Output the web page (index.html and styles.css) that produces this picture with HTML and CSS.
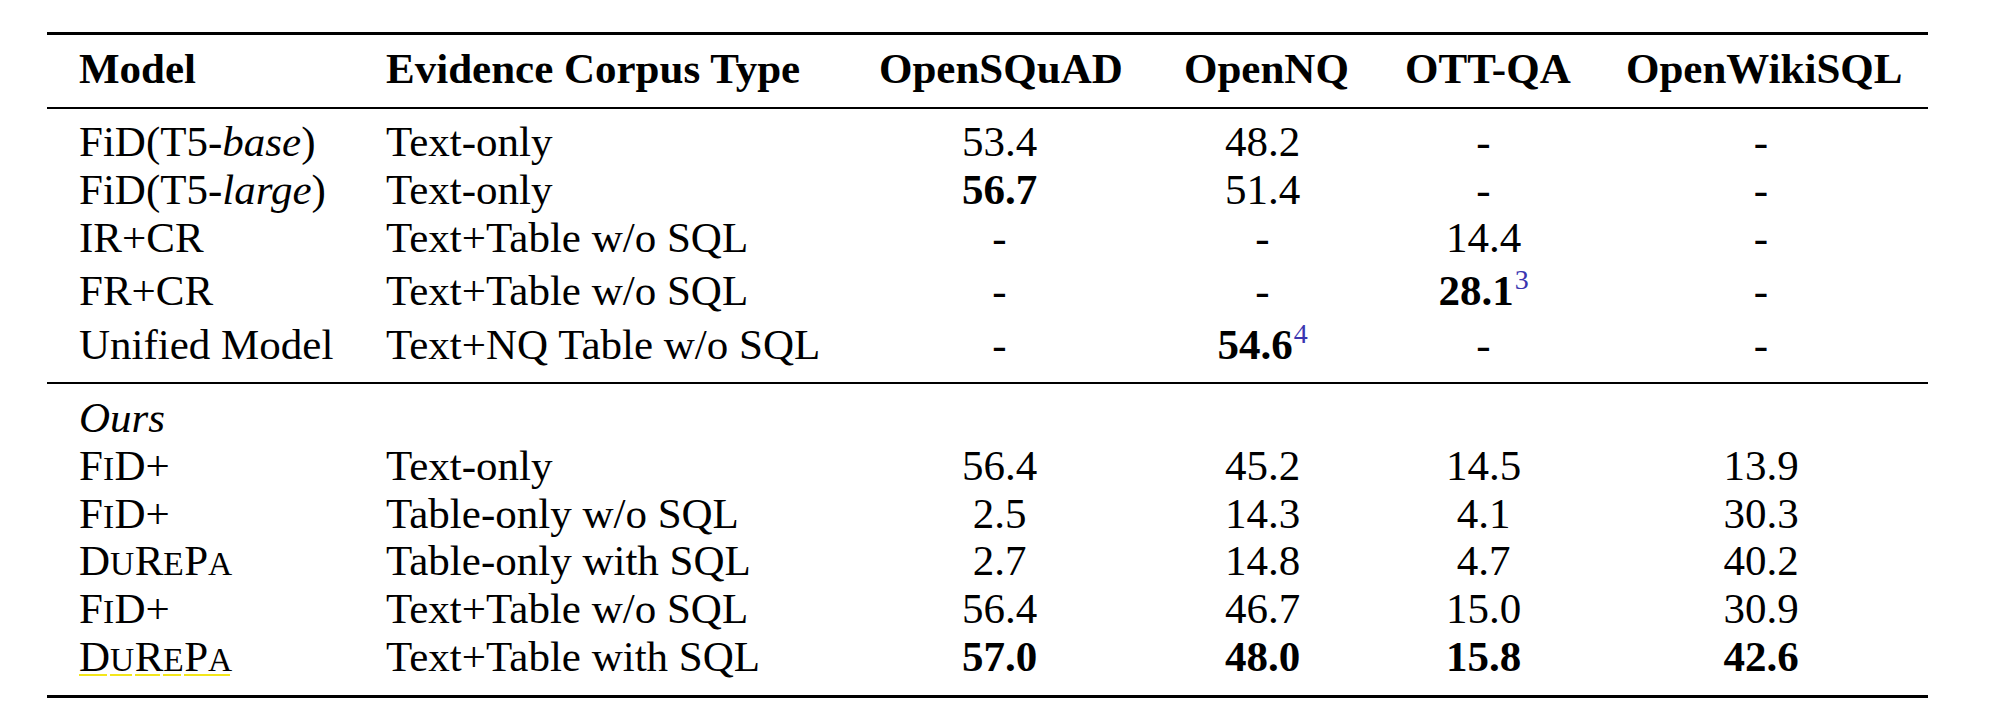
FILE: index.html
```html
<!DOCTYPE html>
<html lang="en">
<head>
<meta charset="utf-8">
<title>Results table</title>
<link rel="stylesheet" href="styles.css">
</head>
<body>
<div class="tbl">
  <div class="sec head">
    <div class="row">
      <div class="c">Model</div>
      <div class="c">Evidence Corpus Type</div>
      <div class="c n">OpenSQuAD</div>
      <div class="c n">OpenNQ</div>
      <div class="c n">OTT-QA</div>
      <div class="c n">OpenWikiSQL</div>
    </div>
  </div>
  <div class="sec">
    <div class="row">
      <div class="c">FiD(T5-<i>base</i>)</div>
      <div class="c">Text-only</div>
      <div class="c n">53.4</div>
      <div class="c n">48.2</div>
      <div class="c n">-</div>
      <div class="c n">-</div>
    </div>
    <div class="row">
      <div class="c">FiD(T5-<i>large</i>)</div>
      <div class="c">Text-only</div>
      <div class="c n"><b>56.7</b></div>
      <div class="c n">51.4</div>
      <div class="c n">-</div>
      <div class="c n">-</div>
    </div>
    <div class="row">
      <div class="c">IR+CR</div>
      <div class="c">Text+Table w/o SQL</div>
      <div class="c n">-</div>
      <div class="c n">-</div>
      <div class="c n">14.4</div>
      <div class="c n">-</div>
    </div>
    <div class="row tall">
      <div class="c">FR+CR</div>
      <div class="c">Text+Table w/o SQL</div>
      <div class="c n">-</div>
      <div class="c n">-</div>
      <div class="c n"><b>28.1</b><sup class="fn">3</sup></div>
      <div class="c n">-</div>
    </div>
    <div class="row tall">
      <div class="c">Unified Model</div>
      <div class="c">Text+NQ Table w/o SQL</div>
      <div class="c n">-</div>
      <div class="c n"><b>54.6</b><sup class="fn">4</sup></div>
      <div class="c n">-</div>
      <div class="c n">-</div>
    </div>
  </div>
  <div class="sec">
    <div class="row">
      <div class="c"><i>Ours</i></div>
      <div class="c"></div>
      <div class="c n"></div>
      <div class="c n"></div>
      <div class="c n"></div>
      <div class="c n"></div>
    </div>
    <div class="row">
      <div class="c">F<span class="sc">i</span>D+</div>
      <div class="c">Text-only</div>
      <div class="c n">56.4</div>
      <div class="c n">45.2</div>
      <div class="c n">14.5</div>
      <div class="c n">13.9</div>
    </div>
    <div class="row">
      <div class="c">F<span class="sc">i</span>D+</div>
      <div class="c">Table-only w/o SQL</div>
      <div class="c n">2.5</div>
      <div class="c n">14.3</div>
      <div class="c n">4.1</div>
      <div class="c n">30.3</div>
    </div>
    <div class="row">
      <div class="c">D<span class="sc">u</span>R<span class="sc">e</span>P<span class="sc">a</span></div>
      <div class="c">Table-only with SQL</div>
      <div class="c n">2.7</div>
      <div class="c n">14.8</div>
      <div class="c n">4.7</div>
      <div class="c n">40.2</div>
    </div>
    <div class="row">
      <div class="c">F<span class="sc">i</span>D+</div>
      <div class="c">Text+Table w/o SQL</div>
      <div class="c n">56.4</div>
      <div class="c n">46.7</div>
      <div class="c n">15.0</div>
      <div class="c n">30.9</div>
    </div>
    <div class="row">
      <div class="c"><span class="hl">D</span><span class="hl"><span class="sc">u</span></span><span class="hl">R</span><span class="hl"><span class="sc">e</span></span><span class="hl">P<span class="sc">a</span></span></div>
      <div class="c">Text+Table with SQL</div>
      <div class="c n"><b>57.0</b></div>
      <div class="c n"><b>48.0</b></div>
      <div class="c n"><b>15.8</b></div>
      <div class="c n"><b>42.6</b></div>
    </div>
  </div>
</div>
</body>
</html>
```

FILE: styles.css
```css
html, body {
  margin: 0;
  padding: 0;
  background: #ffffff;
}

body {
  font-family: "Liberation Serif", "Times New Roman", serif;
  font-size: 43px;
  color: #000000;
}

.tbl {
  margin: 32px 0 0 47px;
  width: 1881px;
  border-top: 3px solid #000000;
  border-bottom: 3px solid #000000;
}

.sec {
  padding: 9.7px 0 14.1px;
}

.sec + .sec {
  border-top: 2px solid #000000;
}

.head {
  font-weight: bold;
}

.row {
  display: grid;
  grid-template-columns: 307px 493px 305px 221px 221px 334px;
  line-height: 47.75px;
}

.row.tall {
  padding-top: 5.7px;
}

.c {
  padding: 0 32px;
  white-space: nowrap;
}

.n {
  text-align: center;
}

.sc {
  text-transform: uppercase;
  font-size: 0.78em;
  letter-spacing: 0.01em;
  line-height: 0;
}

.fn {
  font-size: 28px;
  line-height: 0;
  vertical-align: 16px;
  font-weight: normal;
  color: #3a35b0;
  margin-left: 1px;
}

.hl {
  background-image: linear-gradient(#f3e61a, #f3e61a);
  background-repeat: no-repeat;
  background-size: calc(100% - 3px) 2px;
  background-position: 0 calc(100% - 4px);
}
```
